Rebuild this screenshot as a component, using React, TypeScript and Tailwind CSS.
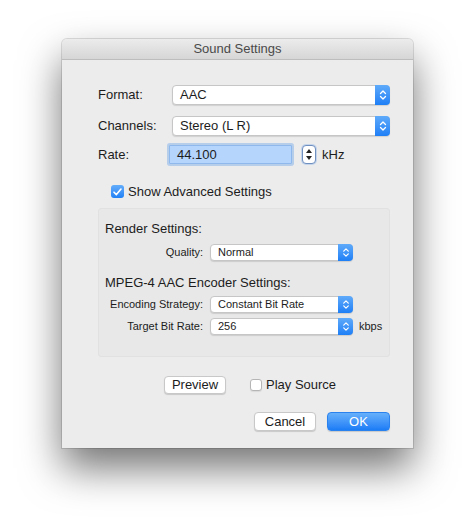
import React from "react";

const font = { fontFamily: '"Helvetica Neue", "Liberation Sans", Arial, sans-serif' };

function Arrows({ small = false }: { small?: boolean }) {
  return (
    <svg width="8" height={small ? 11 : 12} viewBox="0 0 8 12" fill="none">
      <path d="M1.5 4.5 L4 2 L6.5 4.5" stroke="white" strokeWidth="1.3" strokeLinecap="round" strokeLinejoin="round" />
      <path d="M1.5 7.5 L4 10 L6.5 7.5" stroke="white" strokeWidth="1.3" strokeLinecap="round" strokeLinejoin="round" />
    </svg>
  );
}

function Popup({ value, className = "", small = false }: { value: string; className?: string; small?: boolean }) {
  return (
    <div
      className={`flex items-stretch bg-white rounded-[4px] border border-[#c6c6c6] shadow-[0_1px_1px_rgba(0,0,0,0.12)] ${className}`}
    >
      <div className={`flex-1 flex items-center ${small ? "pl-[7px] text-[11px]" : "pl-[7px] text-[13px]"} text-[#1c1c1c]`}>
        {value}
      </div>
      <div className="w-[15px] -my-px -mr-px rounded-r-[4px] bg-gradient-to-b from-[#5eaafa] to-[#1d7ff6] flex items-center justify-center">
        <Arrows small={small} />
      </div>
    </div>
  );
}

function Button({ label, className = "" }: { label: string; className?: string }) {
  return (
    <div
      className={`flex items-center justify-center bg-white rounded-[4px] border border-[#c8c8c8] shadow-[0_1px_1px_rgba(0,0,0,0.15)] text-[13px] text-[#1c1c1c] ${className}`}
    >
      {label}
    </div>
  );
}

export default function App() {
  return (
    <div className="w-[474px] h-[532px] bg-white pt-[39px] pl-[62px]" style={font}>
      <div className="w-[351px] h-[409px] flex flex-col rounded-t-[5px] bg-[#ececec] shadow-[0_0_0_1px_rgba(0,0,0,0.12),0_20px_40px_rgba(0,0,0,0.55)]">
        {/* Title bar */}
        <div className="h-[21px] shrink-0 rounded-t-[5px] bg-gradient-to-b from-[#ececec] to-[#d6d6d6] border-b border-[#bdbdbd] flex items-center justify-center text-[13px] text-[#4a4a4a]">
          Sound Settings
        </div>

        {/* Body */}
        <div className="flex-1 flex flex-col pl-[36px] pr-[23px] text-[13px] text-[#1c1c1c]">
          <div className="flex items-center mt-[25px] h-[20px]">
            <div className="w-[74px]">Format:</div>
            <Popup value="AAC" className="flex-1 h-[20px]" />
          </div>
          <div className="flex items-center mt-[11px] h-[20px]">
            <div className="w-[74px]">Channels:</div>
            <Popup value="Stereo (L R)" className="flex-1 h-[20px]" />
          </div>
          <div className="flex items-center mt-[9px] h-[19px]">
            <div className="w-[71px]">Rate:</div>
            <div className="w-[123px] h-[19px] bg-[#b5d5fc] border border-[#8fb9ec] shadow-[0_0_0_2px_rgba(120,170,235,0.45)] rounded-[1px] flex items-center pl-[7px] text-[13px]">
              44.100
            </div>
            <div className="ml-[10px] w-[14px] h-[19px] bg-white border border-[#6f8fbf] rounded-[4px] flex flex-col items-center justify-center gap-[3px] shadow-[0_0_0_1px_rgba(120,170,235,0.35)]">
              <svg width="6" height="4" viewBox="0 0 6 4">
                <path d="M0 4 L3 0 L6 4 Z" fill="#222" />
              </svg>
              <svg width="6" height="4" viewBox="0 0 6 4">
                <path d="M0 0 L3 4 L6 0 Z" fill="#222" />
              </svg>
            </div>
            <div className="ml-[6px]">kHz</div>
          </div>

          <div className="flex items-center mt-[21px] pl-[13px] h-[13px]">
            <div className="w-[13px] h-[13px] rounded-[3px] bg-gradient-to-b from-[#62acfa] to-[#1f80f6] flex items-center justify-center">
              <svg width="9" height="8" viewBox="0 0 9 8" fill="none">
                <path d="M1 4.2 L3.4 6.6 L8 1" stroke="white" strokeWidth="1.6" strokeLinecap="round" strokeLinejoin="round" />
              </svg>
            </div>
            <div className="ml-[4px]">Show Advanced Settings</div>
          </div>

          {/* Advanced group */}
          <div className="mt-[10px] h-[149px] rounded-[3px] border border-[#e1e1e1] bg-[#e8e8e8] flex flex-col pl-[6px]">
            <div className="mt-[12px] leading-[16px]">Render Settings:</div>
            <div className="flex items-center mt-[7px] h-[17px]">
              <div className="w-[105px] shrink-0 whitespace-nowrap text-right text-[11px] pr-[7px]">Quality:</div>
              <Popup value="Normal" small className="w-[143px] h-[17px]" />
            </div>
            <div className="mt-[14px] leading-[16px]">MPEG-4 AAC Encoder Settings:</div>
            <div className="flex items-center mt-[5px] h-[17px]">
              <div className="w-[105px] shrink-0 whitespace-nowrap text-right text-[11px] pr-[7px]">Encoding Strategy:</div>
              <Popup value="Constant Bit Rate" small className="w-[143px] h-[17px]" />
            </div>
            <div className="flex items-center mt-[5px] h-[17px]">
              <div className="w-[105px] shrink-0 whitespace-nowrap text-right text-[11px] pr-[7px]">Target Bit Rate:</div>
              <Popup value="256" small className="w-[143px] h-[17px]" />
              <div className="ml-[6px] text-[11px]">kbps</div>
            </div>
          </div>

          <div className="flex items-center mt-[19px] h-[18px] pl-[66px]">
            <Button label="Preview" className="w-[62px] h-[18px]" />
            <div className="ml-[24px] w-[12px] h-[12px] bg-white border border-[#b5b5b5] rounded-[3px] shadow-[0_1px_1px_rgba(0,0,0,0.08)]" />
            <div className="ml-[4px]">Play Source</div>
          </div>

          <div className="flex items-center justify-end mt-[18px] h-[19px] gap-[11px]">
            <Button label="Cancel" className="w-[62px] h-[19px]" />
            <div className="w-[63px] h-[19px] rounded-[4px] bg-gradient-to-b from-[#66b0fb] to-[#1a7cf6] border border-[#2a82ef] text-white text-[13px] flex items-center justify-center shadow-[0_1px_1px_rgba(0,0,0,0.15)]">
              OK
            </div>
          </div>
        </div>
      </div>
    </div>
  );
}
